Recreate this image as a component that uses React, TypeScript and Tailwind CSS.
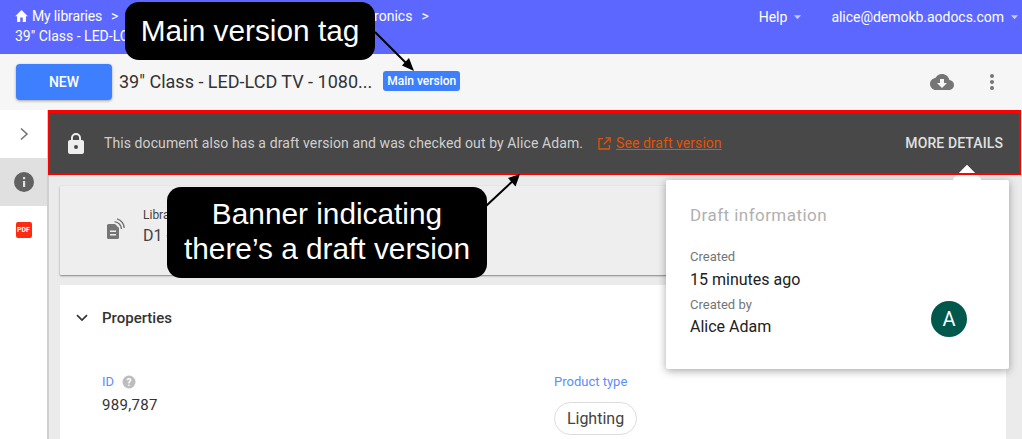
import React from "react";

const Caret = () => (
  <svg width="9" height="5" viewBox="0 0 10 5" className="ml-[6px] mt-[1px]"><path d="M1 0h8L5 4.5z" fill="#c5c9ff" /></svg>
);

const Sep = () => <span className="mx-[9px] text-white">&gt;</span>;

export default function App() {
  return (
    <div className="relative flex h-[439px] w-full flex-col overflow-hidden bg-[#ebebeb] font-['Roboto',sans-serif] text-[#212121]">
      <header className="flex h-[54px] shrink-0 items-start justify-between bg-[#5c67ff] pl-[15px] text-white">
        <div className="w-[430px] pt-[6px] text-[14px] leading-[20px]">
          <div className="flex items-center">
            <svg width="13" height="12" viewBox="2 2 20 19" className="mr-[4px]" fill="white"><path d="M10 21v-7h4v7h5v-9h3L12 2 2 12h3v9z" /></svg>
            <span className="tracking-[-0.15px]">My libraries</span>
            <Sep />
            <span className="ml-[216px]">Electronics</span>
            <Sep />
          </div>
          <div className="whitespace-nowrap">39" Class - LED-LCD TV - 1080p</div>
        </div>
        <div className="flex items-center pt-[7px] pr-[3px] text-[14px] leading-[20px]">
          <span>Help</span>
          <Caret />
          <span className="ml-[29px] tracking-[-0.03px]">alice@demokb.aodocs.com</span>
          <Caret />
        </div>
      </header>

      <div className="flex h-[56px] shrink-0 items-center bg-[#f6f6f6] pl-[16px] pr-[28px]">
        <button className="flex h-[36px] w-[96px] items-center justify-center rounded-[4px] bg-[#3d7fff] text-[14px] font-medium text-white shadow-[0_1px_3px_rgba(0,0,0,0.35)]">NEW</button>
        <h1 className="ml-[7px] mb-[2px] whitespace-nowrap text-[18px] font-normal text-[#333]">39" Class - LED-LCD TV - 1080...</h1>
        <span className="ml-[11px] mb-[3px] flex h-[20px] w-[77px] items-center justify-center rounded-[3px] bg-[#3d7fff] text-[12px] font-medium text-white">Main version</span>
        <div className="ml-auto flex items-center gap-[36px] text-[#757575]">
          <svg width="24" height="24" viewBox="0 0 24 24" fill="#757575"><path d="M19.35 10.04C18.67 6.59 15.64 4 12 4 9.11 4 6.6 5.64 5.35 8.04 2.34 8.36 0 10.91 0 14c0 3.31 2.69 6 6 6h13c2.76 0 5-2.24 5-5 0-2.64-2.05-4.78-4.65-4.96zM17 13l-5 5-5-5h3V9h4v4h3z" /></svg>
          <svg width="4" height="18" viewBox="0 0 4 18" fill="#757575"><circle cx="2" cy="3" r="2" /><circle cx="2" cy="9" r="2" /><circle cx="2" cy="15" r="2" /></svg>
        </div>
      </div>

      <div className="flex min-h-0 flex-1">
        <aside className="flex w-[49px] shrink-0 flex-col items-center border-r-2 border-[#cfcfcf] bg-white">
          <div className="flex h-[48px] w-full items-center justify-center">
            <svg width="12" height="14" viewBox="0 0 12 14" fill="none" stroke="#757575" strokeWidth="1.6"><path d="M3 1.5 9 7l-6 5.5" /></svg>
          </div>
          <div className="flex h-[48px] w-full items-center justify-center bg-[#e0e0e0]">
            <svg width="20" height="20" viewBox="0 0 20 20"><circle cx="10" cy="10" r="10" fill="#616161" /><rect x="9" y="9" width="2.2" height="6" fill="#e0e0e0" /><rect x="9" y="5" width="2.2" height="2.2" fill="#e0e0e0" /></svg>
          </div>
          <div className="mt-[16px] flex h-[16px] w-[16px] items-center justify-center rounded-[2px] bg-[#ff2a12] text-[7px] font-bold leading-none text-white">PDF</div>
        </aside>

        <main className="-ml-[1px] flex min-w-0 flex-1 flex-col">
          <div className="mr-[1px] flex h-[65px] shrink-0 items-center justify-between bg-[#484848] pl-[20px] pr-[18px] pt-[2px]">
            <div className="flex items-center">
              <svg width="16" height="21" viewBox="0 0 16 21" fill="#eeeeee"><path d="M14 7h-1V5A5 5 0 0 0 3 5v2H2a2 2 0 0 0-2 2v10a2 2 0 0 0 2 2h12a2 2 0 0 0 2-2V9a2 2 0 0 0-2-2zM8 16a2 2 0 1 1 0-4 2 2 0 0 1 0 4zm3.1-9H4.9V5a3.1 3.1 0 0 1 6.2 0z" /></svg>
              <span className="ml-[20px] text-[14px] tracking-[0.09px] text-[#cfcfcf]">This document also has a draft version and was checked out by Alice Adam.</span>
              <svg width="13" height="13" viewBox="0 0 13 13" className="ml-[15px]" fill="none" stroke="#e65100" strokeWidth="1.3"><path d="M5 1.6H1v10.4h10.4V8M7.5 .8h4.7v4.7M12 1 5.8 7.2" /></svg>
              <a className="ml-[5px] text-[14px] tracking-[0.05px] text-[#e65100] underline">See draft version</a>
            </div>
            <span className="text-[14px] font-medium tracking-[0.1px] text-[#e0e0e0]">MORE DETAILS</span>
          </div>

          <div className="flex min-h-0 flex-1 flex-col pl-[12px] pr-[16px] pt-[11px]">
            <section className="flex h-[89px] shrink-0 items-center rounded-[1px] bg-[#eeeeee] pl-[47px] shadow-[0_1px_2px_rgba(0,0,0,0.45)]">
              <svg width="18" height="21" viewBox="0 0 18 21" fill="#757575" className="mb-[4px]">
                <path d="M1.5 6H8l4 4v9.5a1.5 1.5 0 0 1-1.5 1.5h-9A1.5 1.5 0 0 1 0 19.5v-12A1.5 1.5 0 0 1 1.5 6zM3 12.5v1.6h6v-1.6zm0 3.5v1.6h6V16z" />
                <path d="M7.5 3.6a8.5 8.5 0 0 1 7 7.4" fill="none" stroke="#757575" strokeWidth="1.4" />
                <path d="M10 .8a10.5 10.5 0 0 1 7.2 9.2" fill="none" stroke="#757575" strokeWidth="1.4" />
              </svg>
              <div className="ml-[18px] mb-[7px] flex flex-col">
                <span className="text-[12px] leading-[18px] text-[#424242]">Library</span>
                <span className="text-[16px] leading-[24px] text-[#424242]">D1 - Products</span>
              </div>
            </section>

            <section className="mt-[10px] flex-1 bg-white pl-[16px]">
              <div className="flex items-center pt-[22px]">
                <svg width="12" height="8" viewBox="0 0 12 8" fill="none" stroke="#333" strokeWidth="1.7"><path d="M1 1.2 6 6l5-4.8" /></svg>
                <span className="ml-[14px] text-[15px] font-medium leading-[22px] text-[#333]">Properties</span>
              </div>
              <div className="mt-[44px] flex pl-[26px]">
                <div className="w-[452px]">
                  <div className="flex items-center text-[13px] leading-[18px] text-[#5c8dff]">
                    ID
                    <svg width="14" height="14" viewBox="0 0 14 14" className="ml-[8px]"><circle cx="7" cy="7" r="6.5" fill="#bdbdbd" /><text x="7" y="10.5" textAnchor="middle" fontSize="10" fontWeight="700" fill="white" fontFamily="Roboto">?</text></svg>
                  </div>
                  <div className="mt-[3px] text-[15px] leading-[22px] tracking-[0.3px] text-[#333]">989,787</div>
                </div>
                <div>
                  <div className="text-[13px] leading-[18px] text-[#5c8dff]">Product type</div>
                  <div className="mt-[11px] flex h-[33px] w-[83px] items-center justify-center rounded-full border border-[#dcdcdc] text-[16px] text-[#424242]">Lighting</div>
                </div>
              </div>
            </section>
          </div>
        </main>
      </div>

      {/* Draft information popover */}
      <div className="absolute left-[666px] top-[180px] h-[189px] w-[343px] rounded-[2px] bg-white pl-[24px] pt-[24px] shadow-[0_2px_8px_rgba(0,0,0,0.35)]">
        <div className="absolute left-[291px] top-[-11px] h-[20px] w-[20px] rotate-45 bg-white" />
        <div className="relative text-[17px] leading-[22px] tracking-[0.45px] text-[#b0b0b0]">Draft information</div>
        <div className="mt-[23px] text-[13px] leading-[16px] text-[#757575]">Created</div>
        <div className="mt-[4px] text-[16px] leading-[22px] text-[#212121]">15 minutes ago</div>
        <div className="mt-[6px] text-[13px] leading-[16px] text-[#757575]">Created by</div>
        <div className="mt-[3px] text-[16px] leading-[22px] text-[#212121]">Alice Adam</div>
        <div className="absolute left-[265px] top-[121px] flex h-[36px] w-[36px] items-center justify-center rounded-full bg-[#00574b] text-[20px] text-white">A</div>
      </div>

      {/* Annotations */}
      <div className="pointer-events-none absolute left-[48px] top-[110px] h-[65px] w-[973px] border-x-2 border-b-2 border-t-[3px] border-[#ff0000]" />
      <svg className="absolute left-0 top-0" width="1022" height="439" viewBox="0 0 1022 439" fill="none">
        <path d="M375 32 410 67" stroke="black" strokeWidth="2" />
        <path d="M414 71 402 65.5 409 58z" fill="black" />
        <path d="M486 206 516 178" stroke="black" strokeWidth="2" />
        <path d="M520 174 515.5 186.5 508 178z" fill="black" />
      </svg>
      <div className="absolute left-[125px] top-[2px] flex h-[58px] w-[250px] items-center justify-center rounded-[14px] bg-black font-['Liberation_Sans',Arial,sans-serif] text-[29.8px] text-white">Main version tag</div>
      <div className="absolute left-[167px] top-[187px] flex h-[91px] w-[320px] flex-col items-center justify-center rounded-[14px] bg-black pb-[3px] font-['Liberation_Sans',Arial,sans-serif] text-[29.8px] leading-[35px] text-white">
        <span>Banner indicating</span>
        <span>there’s a draft version</span>
      </div>
    </div>
  );
}
